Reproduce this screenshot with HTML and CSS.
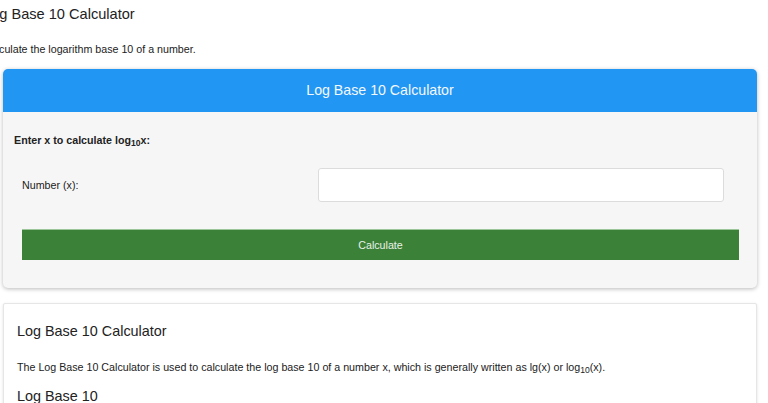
FILE: index.html
```html
<!DOCTYPE html>
<html lang="en">

<head>
     <meta charset="UTF-8" />
     <title>Log Base 10 Calculator</title>
     <meta name="viewport" content="width=device-width, initial-scale=1" />
     <link rel="stylesheet" href="styles.css">
</head>

<body>

     <div class="page">
          <h1 class="page-title">Log Base 10 Calculator</h1>
          <p class="intro">Calculate the logarithm base 10 of a number.</p>

          <div class="calc">
               <div class="calc-head">Log Base 10 Calculator</div>
               <div class="calc-body">
                    <div class="calc-lead">Enter x to calculate log<sub>10</sub>x:</div>
                    <div class="calc-row">
                         <label for="numX">Number (x):</label>
                         <input type="text" id="numX">
                    </div>
                    <button class="calc-btn">Calculate</button>
               </div>
          </div>

          <div class="info">
               <h2>Log Base 10 Calculator</h2>
               <p>The Log Base 10 Calculator is used to calculate the log base 10 of a number x, which is generally written as lg(x) or log<sub>10</sub>(x).</p>
               <h2 class="info-sub">Log Base 10</h2>
          </div>
     </div>

</body>

</html>
```

FILE: styles.css
```css
* {
     box-sizing: border-box;
     margin: 0;
     padding: 0;
}

body {
     font-family: 'Liberation Sans', Arial, sans-serif;
     color: #222;
     background: white;
     overflow: hidden;
}

.page {
     margin: 0 11px 0 3px;
}

.page-title {
     font-size: 14.6px;
     font-weight: normal;
     line-height: 17px;
     padding-top: 6px;
     margin-left: -20px;
}

.intro {
     font-size: 10.7px;
     line-height: 12px;
     margin-top: 20px;
     margin-left: -20px;
}

sub {
     font-size: 0.8em;
     line-height: 0;
     vertical-align: -0.22em;
}

.calc {
     margin-top: 14px;
     border-radius: 5px;
     overflow: hidden;
     background: #f6f6f6;
     box-shadow: 0 1px 4px rgba(0, 0, 0, 0.28);
}

.calc-head {
     background: #2196f3;
     color: #f4f8ff;
     text-align: center;
     font-size: 14.2px;
     height: 43px;
     line-height: 43px;
}

.calc-body {
     padding: 21px 18px 28px 11px;
}

.calc-lead {
     font-size: 10.7px;
     font-weight: bold;
     line-height: 14px;
}

.calc-row {
     display: flex;
     align-items: center;
     margin-top: 21px;
     padding-left: 8px;
     font-size: 10.7px;
}

.calc-row label {
     flex: 1;
}

.calc-row input {
     width: 406px;
     height: 34px;
     margin-right: 15px;
     border: 1px solid #dcdcdc;
     border-radius: 3px;
     background: white;
}

.calc-btn {
     display: block;
     width: calc(100% - 8px);
     margin: 27px 0 0 8px;
     height: 31px;
     background: #3b8238;
     color: #e9f1e8;
     border: none;
     border-top: 1px solid #9cc59a;
     font-family: inherit;
     font-size: 10.7px;
}

.info {
     margin-top: 15px;
     background: white;
     border: 1px solid #e6e6e6;
     box-shadow: 0 1px 3px rgba(0, 0, 0, 0.12);
     padding: 19px 13px 20px;
     border-radius: 2px;
}

.info h2 {
     font-size: 14.4px;
     font-weight: normal;
     line-height: 17px;
}

.info p {
     font-size: 10.7px;
     line-height: 12px;
     margin-top: 21px;
}

.info .info-sub {
     margin-top: 15px;
}
```
